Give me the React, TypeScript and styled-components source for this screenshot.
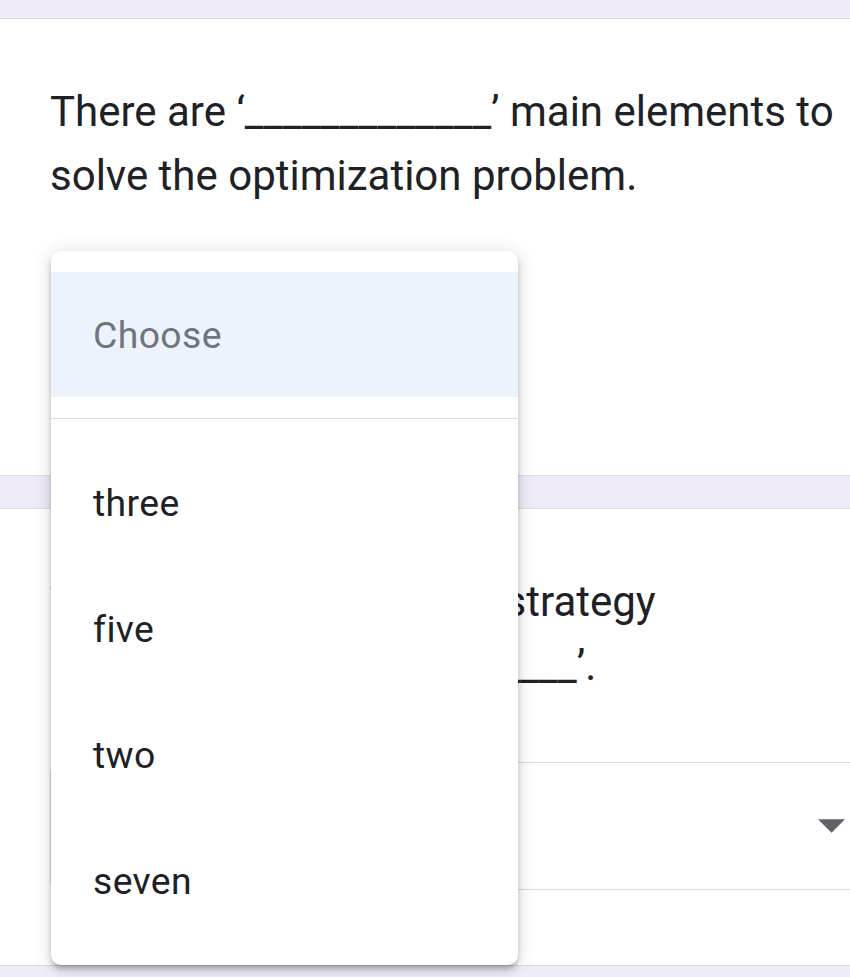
import React from "react";
import styled, { createGlobalStyle } from "styled-components";

const GlobalStyle = createGlobalStyle`
  html, body {
    margin: 0;
    padding: 0;
    overflow: hidden;
    background: #f0ebf8;
  }
  body {
    font-family: Roboto, "Noto Sans", Arial, sans-serif;
    -webkit-font-smoothing: antialiased;
  }
`;

const Page = styled.main`
  display: flex;
  flex-direction: column;
  gap: 32px;
  padding-top: 18px;
  min-height: 977px;
  background: #f0ebf8;
  box-sizing: border-box;
`;

const Card = styled.section`
  position: relative;
  margin: 0 -40px 0 -8px;
  padding: 61px 20px 75px 57px;
  background: #fff;
  border: 1px solid #dadce0;
  border-radius: 8px;
  display: flex;
  flex-direction: column;
  gap: 64px;
`;

const Question = styled.p`
  margin: 0;
  font-size: 42px;
  line-height: 64px;
  letter-spacing: 0;
  color: #202124;
  font-weight: 400;
`;

const SelectAnchor = styled.div`
  position: relative;
  width: 830px;
  height: 128px;
`;

const SelectField = styled.div`
  box-sizing: border-box;
  width: 830px;
  height: 128px;
  border: 1px solid #dadce0;
  border-radius: 10px;
  display: flex;
  align-items: center;
  justify-content: flex-end;
  padding-right: 34px;
`;

const Arrow = styled.svg`
  width: 27px;
  height: 14px;
  display: block;
`;

const Menu = styled.div`
  position: absolute;
  top: -21px;
  left: 1px;
  z-index: 10;
  width: 467px;
  background: #fff;
  border-radius: 10px;
  box-shadow: 0 5px 6px rgba(0, 0, 0, 0.14), 0 2px 18px 2px rgba(0, 0, 0, 0.12),
    0 4px 5px -2px rgba(0, 0, 0, 0.2);
  display: flex;
  flex-direction: column;
`;

const MenuGroup = styled.div`
  padding: 21px 0;
  display: flex;
  flex-direction: column;
`;

const Divider = styled.div`
  height: 1px;
  background: #dadce0;
`;

const Option = styled.div<{ $height: number; $placeholder?: boolean; $active?: boolean }>`
  height: ${(p) => p.$height}px;
  display: flex;
  align-items: center;
  padding-left: 42px;
  font-size: 37.33px;
  letter-spacing: 0.4px;
  color: ${(p) => (p.$placeholder ? "#70757a" : "#202124")};
  background: ${(p) => (p.$active ? "#edf3fd" : "transparent")};
  box-shadow: ${(p) => (p.$active ? "-1px 0 0 #d3d5d9" : "none")};
`;

const options = ["three", "five", "two", "seven"];

export default function App() {
  return (
    <>
      <GlobalStyle />
      <Page>
        <Card>
          <Question>
            There are ‘_____________’ main elements to solve the optimization problem.
          </Question>
          <SelectAnchor>
            <Menu role="listbox">
              <MenuGroup>
                <Option $height={125} $placeholder $active role="option" aria-selected="true">
                  Choose
                </Option>
              </MenuGroup>
              <Divider />
              <MenuGroup>
                {options.map((o) => (
                  <Option key={o} $height={126} role="option">
                    {o}
                  </Option>
                ))}
              </MenuGroup>
            </Menu>
          </SelectAnchor>
        </Card>
        <Card>
          <Question>
            This divide and conquer strategy
            <br />
            is also called ‘______________’.
          </Question>
          <SelectField role="combobox">
            <Arrow viewBox="0 0 10 5" aria-hidden="true">
              <path d="M0 0 L5 5 L10 0 Z" fill="#5f6368" />
            </Arrow>
          </SelectField>
        </Card>
      </Page>
    </>
  );
}
